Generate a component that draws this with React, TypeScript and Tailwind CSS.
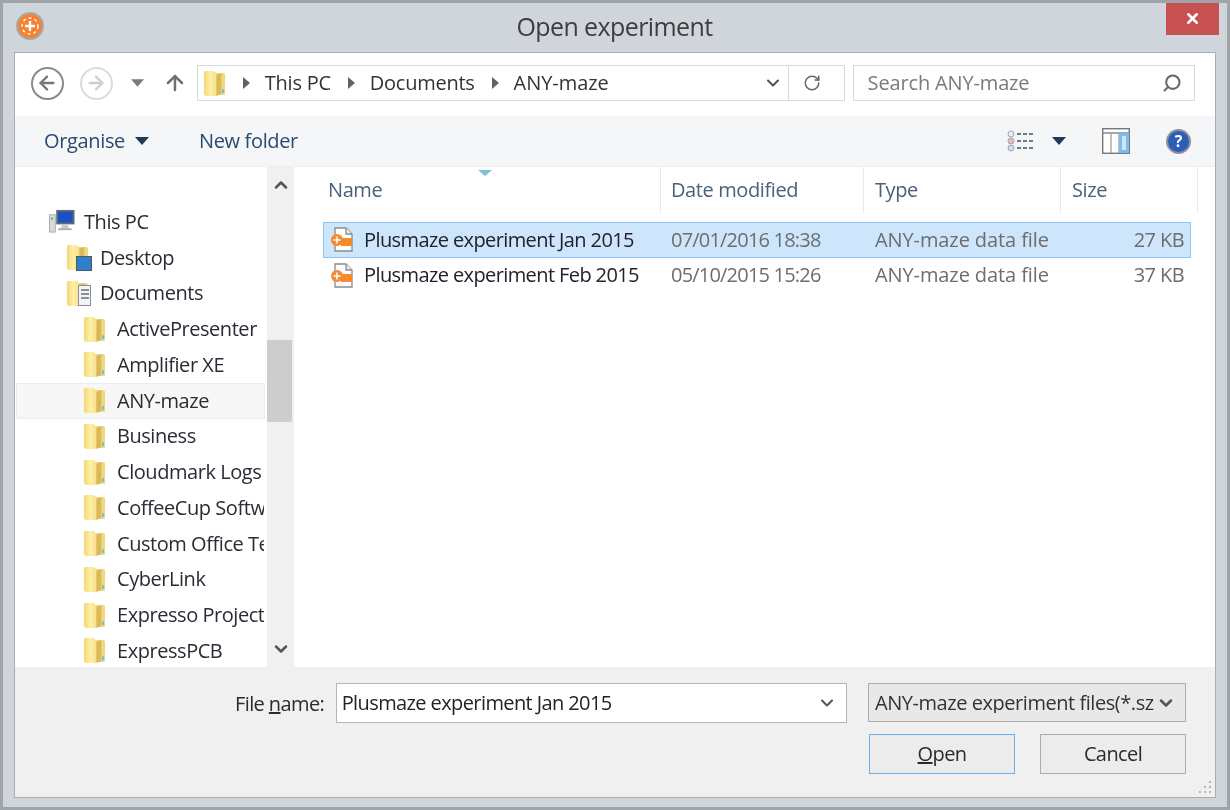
import * as React from "react";
import { ArrowLeft, ArrowRight, ArrowUp, ChevronDown, ChevronUp, RotateCw, Search, X } from "lucide-react";

const FONT = { fontFamily: '"Open Sans", "Noto Sans", sans-serif' };

const NAV_FOLDERS = [
  "ActivePresenter",
  "Amplifier XE",
  "ANY-maze",
  "Business",
  "Cloudmark Logs",
  "CoffeeCup Software",
  "Custom Office Templates",
  "CyberLink",
  "Expresso Projects",
  "ExpressPCB",
];

const FILES = [
  { name: "Plusmaze experiment Jan 2015", date: "07/01/2016 18:38", size: "27 KB", selected: true },
  { name: "Plusmaze experiment Feb 2015", date: "05/10/2015 15:26", size: "37 KB", selected: false },
];

function Folder({ className = "" }: { className?: string }) {
  return (
    <svg viewBox="0 0 24 28" className={`h-[27px] w-[23px] shrink-0 ${className}`}>
      <defs>
        <linearGradient id="folderFront" x1="0" y1="0" x2="1" y2="0">
          <stop offset="0" stopColor="#f3d670" />
          <stop offset="0.5" stopColor="#fdf0a8" />
          <stop offset="1" stopColor="#f7e08a" />
        </linearGradient>
      </defs>
      <path d="M1 3 Q1 1 3 1 H11 L13 3 H21 Q23 3 23 5 V25 Q23 26 21 26 H3 Q1 26 1 24 Z" fill="#efd781" />
      <path d="M1 3 Q1 1 3 1 H11 L14 5 V27 H4 Q1 27 1 24 Z" fill="url(#folderFront)" />
      <path d="M14 5 L19 3 V25 L14 27 Z" fill="#d9b858" />
      <path d="M20 20 H22 V24 H20 Z" fill="#6fc0d6" />
    </svg>
  );
}

function SpecialFolder({ kind }: { kind: "desktop" | "documents" }) {
  return (
    <span className="relative h-[27px] w-[26px] shrink-0">
      <Folder />
      {kind === "desktop" ? (
        <span className="absolute bottom-0 right-0 h-[15px] w-[16px] border border-[#4b5a66] bg-[#2f80c8]" />
      ) : (
        <span className="absolute bottom-[1px] right-[1px] h-[21px] w-[13px] border border-[#8a8f96] bg-[#f1f3f5]">
          <span className="mx-auto mt-[3px] block h-[2px] w-[8px] bg-[#8a8f96]" />
          <span className="mx-auto mt-[2px] block h-[2px] w-[8px] bg-[#8a8f96]" />
          <span className="mx-auto mt-[2px] block h-[2px] w-[8px] bg-[#8a8f96]" />
        </span>
      )}
    </span>
  );
}

function PcIcon() {
  return (
    <svg viewBox="0 0 28 26" className="h-[25px] w-[28px] shrink-0">
      <rect x="1" y="6" width="6" height="18" fill="#d7d9dc" stroke="#9a9da1" strokeWidth="0.8" />
      <rect x="2.5" y="9" width="2" height="2" fill="#3bbf4a" />
      <rect x="8" y="1" width="19" height="15" fill="#5d6a78" />
      <rect x="10" y="3" width="15" height="11" fill="#1a4fc8" />
      <path d="M14 16 H20 L21 20 H13 Z" fill="#c5c8cc" />
      <rect x="10" y="20" width="14" height="2" fill="#a8abb0" />
    </svg>
  );
}

function FileIcon() {
  return (
    <svg viewBox="0 0 24 25" className="h-[25px] w-[24px] shrink-0">
      <path d="M5 1 H16 L22 7 V24 H5 Z" fill="#fff" stroke="#8b8b8b" strokeWidth="1.3" />
      <path d="M16 1 V7 H22" fill="#eee" stroke="#8b8b8b" strokeWidth="1.3" />
      <rect x="11" y="11" width="11" height="8" fill="#f58a2e" />
      <circle cx="7" cy="13" r="6" fill="#f58a2e" />
      <path d="M7 9.5 V16.5 M3.5 13 H10.5" stroke="#fff" strokeWidth="1.5" />
    </svg>
  );
}

function Caret({ color }: { color: string }) {
  return (
    <svg viewBox="0 0 14 8" className="h-[8px] w-[14px]">
      <path d="M0 0 H14 L7 8 Z" fill={color} />
    </svg>
  );
}

function Crumb() {
  return (
    <svg viewBox="0 0 7 12" className="h-[12px] w-[7px] shrink-0">
      <path d="M0 0 L7 6 L0 12 Z" fill="#5f6368" />
    </svg>
  );
}

function NavRow({ indent, icon, label, active }: { indent: string; icon: React.ReactNode; label: string; active?: boolean }) {
  return (
    <div className={`mr-[2px] flex h-[35.75px] shrink-0 items-center overflow-hidden whitespace-nowrap border tracking-[-0.45px] ${indent} ${active ? "ml-[1px] border-[#ececec] bg-[#f7f7f7]" : "border-transparent"}`}>
      {icon}
      <span className="text-[#2b2b36]">{label}</span>
    </div>
  );
}

function ColumnHeader({ label, className }: { label: string; className: string }) {
  return (
    <div className={`flex h-[46px] items-center border-r border-[#e3ebf4] tracking-[-0.4px] text-[#4c607a] ${className}`}>{label}</div>
  );
}

export default function App() {
  return (
    <div className="flex h-[810px] w-[1230px] flex-col overflow-hidden border-[3px] border-[#9fa4a9] bg-[#d0d5dc] text-[20px] leading-none tracking-[-0.6px] blur-[0.4px]" style={FONT}>
      {/* Title bar */}
      <div className="relative flex h-[49px] shrink-0 items-center justify-center pb-[2px] text-[25px] text-[#3d3d3d]">
        <span className="absolute left-[13px] top-[9px] flex h-[28px] w-[28px] items-center justify-center rounded-full border-[2px] border-[#a9a9a9] bg-[#f58233]">
          <svg viewBox="0 0 20 20" className="h-[20px] w-[20px]">
            <circle cx="10" cy="10" r="8" fill="none" stroke="#fff" strokeWidth="1.4" strokeDasharray="3 3" />
            <path d="M10 5 V15 M5 10 H15" stroke="#fff" strokeWidth="2.4" />
          </svg>
        </span>
        <span className="-ml-[1px]">Open experiment</span>
        <span className="absolute right-[8px] top-[-1px] flex h-[33px] w-[53px] items-center justify-center bg-[#c75050]">
          <X className="h-[17px] w-[17px] text-white" strokeWidth={3.5} />
        </span>
      </div>

      {/* Dialog body */}
      <div className="mx-[11px] flex min-h-0 flex-1 flex-col border border-[#a8adb3] bg-white">
        {/* Address row */}
        <div className="flex h-[63px] shrink-0 items-center pb-[3px] pl-[16px] pr-[20px]">
          <span className="flex h-[33px] w-[33px] items-center justify-center rounded-full border-[2px] border-[#8a8a8a]">
            <ArrowLeft className="h-[22px] w-[22px] text-[#777]" strokeWidth={2.5} />
          </span>
          <span className="ml-[16px] flex h-[33px] w-[33px] items-center justify-center rounded-full border-[2px] border-[#dcdcdc]">
            <ArrowRight className="h-[22px] w-[22px] text-[#cfcfcf]" strokeWidth={2.5} />
          </span>
          <span className="ml-[18px] flex w-[13px]"><Caret color="#7b7b7b" /></span>
          <ArrowUp className="ml-[19px] h-[24px] w-[24px] text-[#6f6f6f]" strokeWidth={2.5} />
          <div className="ml-[10px] flex h-[36px] w-[649px] items-center border border-[#d9d9d9] pl-[5px]">
            <Folder />
            <span className="ml-[17px]"><Crumb /></span>
            <span className="ml-[15px] tracking-[-0.25px] text-[#333]">This PC</span>
            <span className="ml-[17px]"><Crumb /></span>
            <span className="ml-[15px] tracking-[-0.25px] text-[#333]">Documents</span>
            <span className="ml-[17px]"><Crumb /></span>
            <span className="ml-[15px] tracking-[-0.05px] text-[#333]">ANY-maze</span>
            <span className="ml-auto flex h-full w-[81px] items-center">
              <ChevronDown className="h-[20px] w-[20px] text-[#555]" strokeWidth={2.5} />
              <span className="ml-[5px] h-full w-px bg-[#d9d9d9]" />
              <RotateCw className="ml-[14px] h-[18px] w-[18px] text-[#666]" strokeWidth={2} />
            </span>
          </div>
          <div className="ml-[8px] flex h-[36px] w-[343px] items-center justify-between border border-[#d9d9d9] pl-[14px] pr-[12px] tracking-[-0.15px] text-[#7a7a7a]">
            <span>Search ANY-maze</span>
            <Search className="h-[20px] w-[20px] -scale-x-100 text-[#666]" strokeWidth={2.5} />
          </div>
        </div>

        {/* Toolbar */}
        <div className="flex h-[51px] shrink-0 items-center border-b border-[#eeeff0] bg-[#f5f6f7] pl-[29px] pr-[24px] tracking-[-0.35px] text-[#2b4a70]">
          <span>Organise</span>
          <span className="ml-[10px] flex"><Caret color="#1e3a5f" /></span>
          <span className="ml-[50px]">New folder</span>
          <svg viewBox="0 0 28 22" className="ml-auto h-[22px] w-[28px]">
            <circle cx="5" cy="4" r="3" fill="#e8eef4" stroke="#9aa7b4" />
            <circle cx="5" cy="11" r="3" fill="#f4b8b0" stroke="#9aa7b4" />
            <circle cx="5" cy="18" r="3" fill="#cfe0f0" stroke="#9aa7b4" />
            <path d="M11 4 H27 M11 11 H27 M11 18 H27" stroke="#6d7a88" strokeWidth="2" strokeDasharray="4 2" />
          </svg>
          <span className="ml-[18px] flex"><Caret color="#1e3a5f" /></span>
          <svg viewBox="0 0 28 26" className="ml-[36px] h-[26px] w-[28px]">
            <rect x="0.7" y="0.7" width="26.6" height="24.6" fill="#fff" stroke="#777" strokeWidth="1.4" />
            <path d="M0.7 5 H27.3" stroke="#888" strokeWidth="1.5" />
            <path d="M9 5 V25 M17 5 V25" stroke="#999" strokeWidth="1.2" />
            <rect x="17" y="5" width="10" height="20" fill="#7cbcf0" />
            <rect x="20" y="8" width="4" height="14" fill="#cfe6fa" />
          </svg>
          <span className="ml-[36px] flex h-[25px] w-[25px] items-center justify-center rounded-full border-[2px] border-[#8b919a] bg-[#2d5db8] text-[16px] font-bold text-white">?</span>
        </div>

        {/* Navigation pane and file list */}
        <div className="flex min-h-0 flex-1">
          <div className="flex w-[252px] shrink-0 flex-col overflow-hidden pt-[37px]">
            <NavRow indent="pl-[32px]" icon={<span className="mr-[8px] flex"><PcIcon /></span>} label="This PC" />
            <NavRow indent="pl-[50px]" icon={<span className="mr-[8px] flex"><SpecialFolder kind="desktop" /></span>} label="Desktop" />
            <NavRow indent="pl-[50px]" icon={<span className="mr-[8px] flex"><SpecialFolder kind="documents" /></span>} label="Documents" />
            {NAV_FOLDERS.map((label) => (
              <NavRow
                key={label}
                indent={label === "ANY-maze" ? "pl-[66px]" : "pl-[67px]"}
                icon={<Folder className="mr-[11px]" />}
                label={label}
                active={label === "ANY-maze"}
              />
            ))}
          </div>

          {/* Nav scrollbar */}
          <div className="flex w-[27px] shrink-0 flex-col bg-[#f0f0f0]">
            <div className="flex h-[36px] items-center justify-center">
              <ChevronUp className="h-[20px] w-[20px] text-[#555]" strokeWidth={3} />
            </div>
            <div className="mt-[137px] h-[82px] w-[25px] bg-[#cdcdcd]" />
            <div className="mt-auto flex h-[36px] items-center justify-center">
              <ChevronDown className="h-[20px] w-[20px] text-[#555]" strokeWidth={3} />
            </div>
          </div>

          {/* File list */}
          <div className="relative min-w-0 flex-1 pl-[3px]">
            <span className="absolute left-[184px] top-[3px] h-0 w-0 border-x-[7px] border-t-[6px] border-x-transparent border-t-[#7cc0dc]" />
            <div className="flex">
              <ColumnHeader label="Name" className="w-[364px] pl-[31px]" />
              <ColumnHeader label="Date modified" className="w-[203px] pl-[10px]" />
              <ColumnHeader label="Type" className="w-[197px] pl-[11px]" />
              <ColumnHeader label="Size" className="w-[137px] pl-[11px]" />
            </div>
            <div className="mt-[9px] flex w-[894px] flex-col pl-[26px]">
              {FILES.map((file) => (
                <div
                  key={file.name}
                  className={`flex h-[35.5px] items-center whitespace-nowrap border pl-[6px] pr-[6px] ${file.selected ? "border-[#90c4f4] bg-[#cde6fc]" : "border-transparent"}`}
                >
                  <FileIcon />
                  <span className="ml-[10px] w-[307px] text-[#22222c]">{file.name}</span>
                  <span className="w-[204px] tracking-[-0.8px] text-[#6d6d6d]">{file.date}</span>
                  <span className="w-[230px] tracking-[-0.1px] text-[#6d6d6d]">ANY-maze data file</span>
                  <span className="ml-auto text-[#6d6d6d]">{file.size}</span>
                </div>
              ))}
            </div>
          </div>
        </div>

        {/* Bottom panel */}
        <div className="relative flex h-[130px] shrink-0 flex-col bg-[#f0f0f0] pr-[29px]">
          <div className="mt-[16px] flex items-start">
            <span className="ml-[220px] mt-[11px] w-[91px] whitespace-nowrap text-[#2b2b2b]">File <span className="underline">n</span>ame:</span>
            <div className="ml-[10px] flex h-[40px] w-[513px] items-center justify-between border border-[#b5b5b5] bg-white pl-[5px] pr-[9px] text-[#22222c]">
              <span>Plusmaze experiment Jan 2015</span>
              <ChevronDown className="h-[20px] w-[20px] text-[#555]" strokeWidth={2.5} />
            </div>
            <div className="ml-[21px] flex h-[39px] w-[319px] items-center justify-between border border-[#acacac] bg-[#e8e8e8] pl-[6px] pr-[9px] tracking-[-0.45px] text-[#333]">
              <span className="w-[279px] overflow-hidden whitespace-nowrap">ANY-maze experiment files(*.sz</span>
              <ChevronDown className="h-[20px] w-[20px] text-[#555]" strokeWidth={3} />
            </div>
          </div>
          <div className="mt-[11px] flex justify-end gap-[25px]">
            <button className="h-[40px] w-[146px] border-[1.5px] border-[#6bb0f0] bg-[#ececec] text-[#2b2b2b]"><span className="underline">O</span>pen</button>
            <button className="h-[40px] w-[146px] border border-[#adadad] bg-[#ececec] text-[#2b2b2b]">Cancel</button>
          </div>
          <svg viewBox="0 0 14 14" className="absolute bottom-[3px] right-[3px] h-[14px] w-[14px]">
            <path d="M11 1 h2 v2 h-2z M6 6 h2 v2 h-2z M11 6 h2 v2 h-2z M1 11 h2 v2 h-2z M6 11 h2 v2 h-2z M11 11 h2 v2 h-2z" fill="#b5b5b5" />
          </svg>
        </div>
      </div>
      <div className="h-[9px] shrink-0" />
    </div>
  );
}
